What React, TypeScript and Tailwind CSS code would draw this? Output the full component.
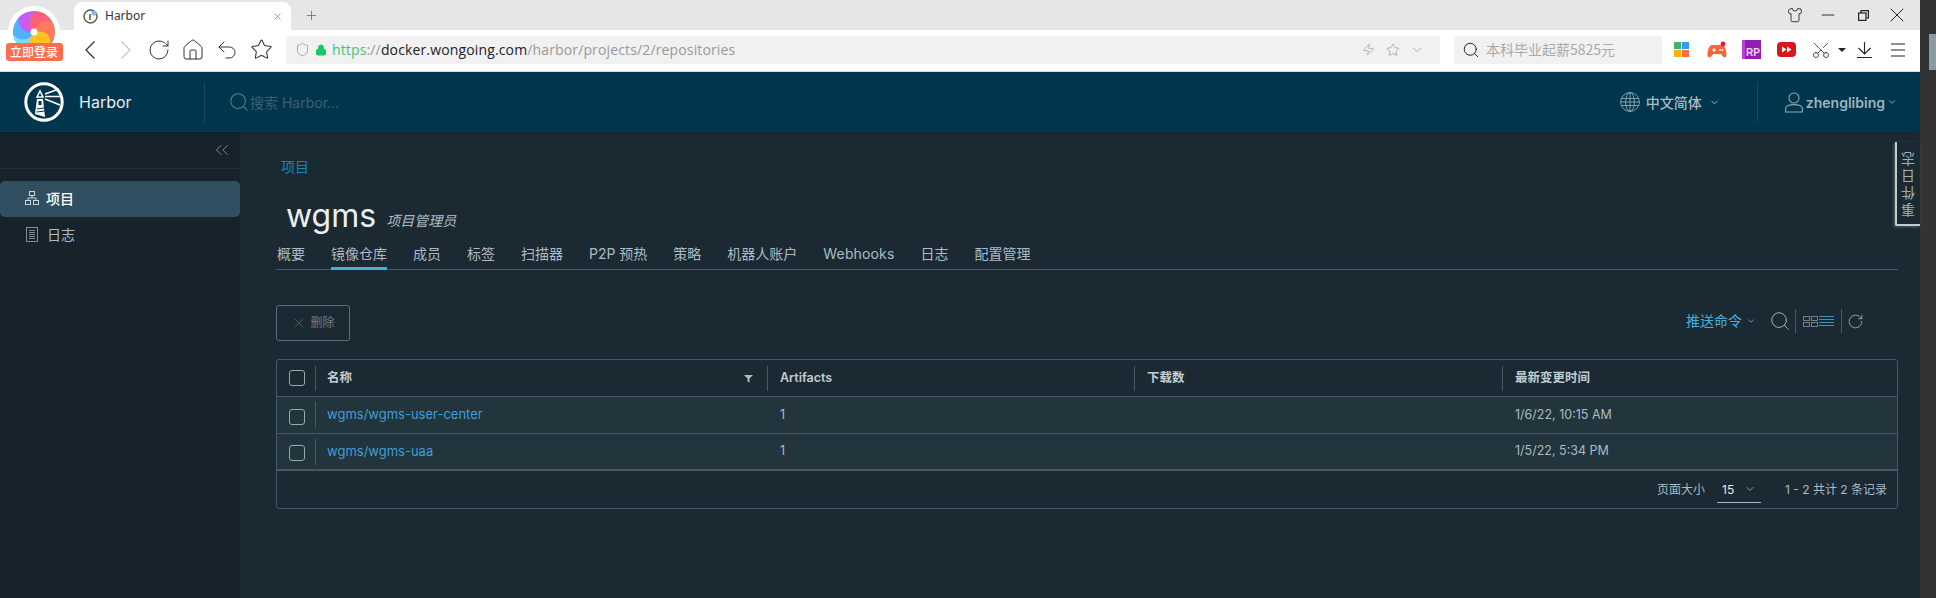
import React from 'react'
import { ChevronDown, ChevronsLeft, Lock, Minus, Plus, RotateCw, Scissors, Search, Shirt, Star, Undo2, X, Zap, Home, Shield } from 'lucide-react'

const cjk = "font-['Inter','Noto_Sans_CJK_SC',sans-serif]"

const tabs = ['概要', '镜像仓库', '成员', '标签', '扫描器', 'P2P 预热', '策略', '机器人账户', 'Webhooks', '日志', '配置管理']

const repos = [
  { name: 'wgms/wgms-user-center', artifacts: '1', time: '1/6/22, 10:15 AM' },
  { name: 'wgms/wgms-uaa', artifacts: '1', time: '1/5/22, 5:34 PM' },
]

const columns = 'grid grid-cols-[38px_452px_367px_368px_1fr]'

const Pinwheel = () => (
  <svg width="52" height="52" viewBox="0 0 52 52">
    <defs>
      <clipPath id="wheel"><circle cx="26" cy="26" r="21" /></clipPath>
    </defs>
    <circle cx="26" cy="26" r="26" fill="#fff" />
    <g clipPath="url(#wheel)">
      <circle cx="26" cy="26" r="21" fill="#6fdc7c" />
      <circle cx="15" cy="31" r="12" fill="#7fd8f5" />
      <circle cx="15" cy="21" r="12.5" fill="#4fb2ff" />
      <circle cx="23" cy="14" r="12.5" fill="#c85cf2" />
      <circle cx="34" cy="17" r="12.5" fill="#ff5f7a" />
      <circle cx="38" cy="27" r="12" fill="#ff7a5c" />
      <circle cx="32" cy="36" r="10.5" fill="#ffc21f" />
    </g>
    <circle cx="26" cy="26" r="3.5" fill="#fff" />
  </svg>
)

const HarborLogo = () => (
  <svg width="40" height="40" viewBox="0 0 40 40" fill="none">
    <circle cx="20" cy="20" r="18.2" stroke="#fff" strokeWidth="3" />
    <path d="M11 32 L13 17 L19 17 L21 35 Z" fill="#fff" />
    <path d="M13 15 L16 9 L19 15 Z" stroke="#fff" strokeWidth="1.6" />
    <rect x="14.5" y="19" width="3" height="4" fill="#00364d" />
    <path d="M13 27 L20 26 M12.5 30 L20.5 29" stroke="#00364d" strokeWidth="1" />
    <path d="M21 12 L35 7 M21 14.5 L37 14.5 M21 17 L36 23" stroke="#fff" strokeWidth="1.5" />
  </svg>
)

const Favicon = () => (
  <svg width="15" height="15" viewBox="0 0 15 15" fill="none">
    <circle cx="7.5" cy="7.5" r="6.5" stroke="#4a5a50" strokeWidth="1.4" />
    <rect x="6" y="5" width="2" height="6" fill="#5e8f4c" />
    <circle cx="11" cy="4" r="2.6" fill="#8fb6dc" />
  </svg>
)

const Tile = () => (
  <svg width="15" height="15" viewBox="0 0 15 15">
    <rect x="0" y="0" width="7" height="7" fill="#3bb56b" />
    <rect x="8" y="0" width="7" height="7" fill="#2f9bf4" />
    <rect x="0" y="8" width="7" height="7" fill="#ffb115" />
    <rect x="8" y="8" width="7" height="7" fill="#ff6b45" />
  </svg>
)

const Gamepad = () => (
  <svg width="20" height="18" viewBox="0 0 20 18">
    <path d="M5 4 H15 C18 4 19.5 10 19.5 14 C19.5 17 16.5 17 15 14.5 L14 13 H6 L5 14.5 C3.5 17 0.5 17 0.5 14 C0.5 10 2 4 5 4 Z" fill="#ff6238" />
    <path d="M5 9 H9 M7 7 V11" stroke="#fff" strokeWidth="1.2" />
    <circle cx="13" cy="9" r="1" fill="#fff" />
    <circle cx="15.5" cy="9" r="1" fill="#fff" />
    <circle cx="16" cy="3" r="2.4" fill="#f01d1d" />
  </svg>
)

const RpIcon = () => (
  <div className="flex h-[19px] w-[19px] items-end justify-end border-l-[3px] border-[#c13fd8] bg-[#8f1fb5] pr-[1px]">
    <span className="font-['Liberation_Sans',sans-serif] text-[10px] font-bold leading-[12px] text-[#f3d5ff]">RP</span>
  </div>
)

const VideoIcon = () => (
  <svg width="19" height="15" viewBox="0 0 19 15">
    <rect width="19" height="15" rx="4" fill="#d8171c" />
    <path d="M5 4.5 L9.5 7.5 L5 10.5 Z M10 4.5 L14.5 7.5 L10 10.5 Z" fill="#fff" />
  </svg>
)

const BackArrow = ({ color, flip }: { color: string; flip?: boolean }) => (
  <svg width="10" height="18" viewBox="0 0 10 18" fill="none" stroke={color} strokeWidth="1.3" className={flip ? 'scale-x-[-1]' : ''}>
    <path d="M9.5 0.5 L1 9 L9.5 17.5" />
  </svg>
)

const RestoreIcon = () => (
  <svg width="11" height="11" viewBox="0 0 11 11" fill="none" stroke="#222" strokeWidth="1.2">
    <rect x="0.6" y="3" width="7.4" height="7.4" />
    <path d="M3 3 V0.6 H10.4 V8 H8" />
  </svg>
)

const DownloadIcon = () => (
  <svg width="15" height="16" viewBox="0 0 15 16" fill="none" stroke="#222" strokeWidth="1.1">
    <path d="M7.5 0 V12 M1.5 6 L7.5 12 L13.5 6 M0 15.5 H15" />
  </svg>
)

const MenuIcon = () => (
  <svg width="14" height="14" viewBox="0 0 14 14" fill="none" stroke="#222" strokeWidth="1.1">
    <path d="M0 1 H14 M0 7 H14 M0 13 H14" />
  </svg>
)

const GlobeIcon = () => (
  <svg width="20" height="20" viewBox="0 0 20 20" fill="none" stroke="#8fa9b6" strokeWidth="0.9">
    <circle cx="10" cy="10" r="9.4" />
    <ellipse cx="10" cy="10" rx="4.4" ry="9.4" />
    <path d="M10 0.6 V19.4 M1.4 6.5 H18.6 M0.6 10 H19.4 M1.4 13.5 H18.6" />
  </svg>
)

const UserIcon = () => (
  <svg width="18" height="21" viewBox="0 0 18 21" fill="none" stroke="#8fa9b6" strokeWidth="1.1">
    <circle cx="9" cy="6" r="5" />
    <path d="M0.6 20 V16.5 C0.6 14 4.5 12.6 9 12.6 C13.5 12.6 17.4 14 17.4 16.5 V20 Z" />
  </svg>
)

const OrgIcon = () => (
  <svg width="14" height="14" viewBox="0 0 14 14" fill="none" stroke="#c9d3d9" strokeWidth="1">
    <rect x="4.5" y="0.5" width="5" height="4" />
    <rect x="0.5" y="9.5" width="5" height="4" />
    <rect x="8.5" y="9.5" width="5" height="4" />
    <path d="M7 4.5 V7 M3 9.5 V7 H11 V9.5" />
  </svg>
)

const LogIcon = () => (
  <svg width="12" height="15" viewBox="0 0 12 15" fill="none" stroke="#7d8e98" strokeWidth="1">
    <rect x="0.5" y="0.5" width="11" height="14" />
    <path d="M3 3.5 H9 M3 5.5 H9 M3 7.5 H9 M3 9.5 H9 M3 11.5 H9" />
  </svg>
)

const GridIcon = () => (
  <svg width="15" height="11" viewBox="0 0 15 11" fill="none" stroke="#6f818c" strokeWidth="1">
    <rect x="0.5" y="0.5" width="6" height="4" />
    <rect x="8.5" y="0.5" width="6" height="4" />
    <rect x="0.5" y="6.5" width="6" height="4" />
    <rect x="8.5" y="6.5" width="6" height="4" />
  </svg>
)

const ListIcon = () => (
  <svg width="15" height="11" viewBox="0 0 15 11" fill="none" stroke="#3c93b8" strokeWidth="1">
    <path d="M0 0.5 H15 M0 3.5 H15 M0 6.5 H15 M0 9.5 H15" />
  </svg>
)

const Check = () => <div className="h-[16px] w-[16px] rounded-[3px] border border-[#9aa8b0]" />

const BrowserChrome = () => (
  <>
    <div className="flex h-[30px] items-end bg-[#e6e6e6] pl-[74px] pr-[11px]">
      <div className="flex h-[28px] w-[217px] items-center rounded-t-[8px] bg-white pl-[9px] pr-[8px]">
        <Favicon />
        <span className="ml-[7px] flex-1 font-['Noto_Sans',sans-serif] text-[12px] text-[#333]">Harbor</span>
        <X size={11} color="#777" strokeWidth={1.5} />
      </div>
      <Plus size={15} color="#666" strokeWidth={1.2} className="mb-[7px] ml-[13px]" />
      <div className="ml-auto flex items-center self-center text-[#222]">
        <Shirt size={16} strokeWidth={1.3} />
        <Minus size={20} strokeWidth={1.1} className="ml-[15px]" />
        <div className="ml-[20px]"><RestoreIcon /></div>
        <X size={24} strokeWidth={1} className="ml-[16px]" />
      </div>
    </div>
    <div className="flex h-[42px] items-center border-b border-[#d5dde2] bg-white pb-[2px] pl-[85px]">
      <BackArrow color="#333" />
      <div className="ml-[26px]"><BackArrow color="#c4c4c4" flip /></div>
      <RotateCw size={24} color="#333" strokeWidth={1} className="ml-[16px]" />
      <Home size={24} color="#333" strokeWidth={1} className="ml-[10px]" />
      <Undo2 size={24} color="#333" strokeWidth={1} className="ml-[10px]" />
      <Star size={23} color="#333" strokeWidth={1.1} className="ml-[11px]" />
      <div className="ml-[13px] flex h-[28px] w-[1154px] shrink-0 items-center rounded-[3px] bg-[#f1f1f1] pl-[9px] pr-[16px]">
        <Shield size={15} color="#999" strokeWidth={1.3} />
        <Lock size={12} color="#17c964" fill="#17c964" strokeWidth={2} className="ml-[5px]" />
        <span className="ml-[5px] font-['Open_Sans',sans-serif] text-[14px] tracking-[0.01em] text-[#999]">
          <span className="text-[#3fc77a]">https</span>://<span className="text-[#222]">docker.wongoing.com</span>/harbor/projects/2/repositories
        </span>
        <Zap size={13} color="#999" strokeWidth={1.3} className="ml-auto" />
        <Star size={14} color="#999" strokeWidth={1.3} className="ml-[11px]" />
        <ChevronDown size={14} color="#999" strokeWidth={1.3} className="ml-[10px]" />
      </div>
      <div className="ml-[14px] flex h-[28px] w-[208px] shrink-0 items-center rounded-[3px] bg-[#f1f1f1] pl-[8px]">
        <Search size={18} color="#222" strokeWidth={1.3} />
        <span className="ml-[6px] font-['Noto_Sans_CJK_SC',sans-serif] text-[14px] text-[#aaa]">本科毕业起薪5825元</span>
      </div>
      <div className="ml-[12px] flex items-center">
        <Tile />
        <div className="ml-[18px]"><Gamepad /></div>
        <div className="ml-[15px]"><RpIcon /></div>
        <div className="ml-[16px]"><VideoIcon /></div>
        <Scissors size={20} color="#333" strokeWidth={1} className="ml-[15px] -rotate-90" />
        <div className="ml-[7px] h-0 w-0 border-x-[4px] border-t-[4px] border-x-transparent border-t-[#222]" />
        <div className="ml-[11px]"><DownloadIcon /></div>
        <div className="ml-[19px]"><MenuIcon /></div>
      </div>
    </div>
  </>
)

const Header = () => (
  <div className={`flex h-[60px] items-center bg-[#00364d] pl-[24px] ${cjk}`}>
    <HarborLogo />
    <span className="ml-[15px] w-[125px] text-[16px] text-[#e4eef2]">Harbor</span>
    <div className="h-[40px] w-px bg-[#1d4a5e]" />
    <Search size={22} color="#5b7f90" strokeWidth={1.1} className="ml-[23px]" />
    <span className="text-[14px] text-[#3b6073]">搜索 Harbor...</span>
    <div className="ml-auto"><GlobeIcon /></div>
    <span className="ml-[6px] text-[14px] font-medium text-[#a9bcc6]">中文简体</span>
    <ChevronDown size={11} color="#a9bcc6" className="ml-[7px]" />
    <div className="ml-[37px] h-[40px] w-px bg-[#1d4a5e]" />
    <div className="ml-[27px]"><UserIcon /></div>
    <span className="ml-[3px] text-[14px] font-semibold text-[#9db3bf]">zhenglibing</span>
    <ChevronDown size={10} color="#a9bcc6" className="ml-[2px] mr-[23px]" />
  </div>
)

const Sidebar = () => (
  <aside className={`w-[240px] shrink-0 bg-[#17232b] ${cjk}`}>
    <div className="flex h-[37px] items-center justify-end border-b border-[#1f2e38] pr-[7px]">
      <ChevronsLeft size={22} color="#8a9aa4" strokeWidth={0.9} />
    </div>
    <div className="mt-[12px] flex h-[36px] items-center rounded-[5px] bg-[#324f61] pb-[2px] pl-[25px]">
      <OrgIcon />
      <span className="ml-[7px] text-[14px] font-medium text-white">项目</span>
    </div>
    <div className="flex h-[36px] items-center pb-[2px] pl-[26px]">
      <LogIcon />
      <span className="ml-[9px] text-[14px] text-[#acbac3]">日志</span>
    </div>
  </aside>
)

const RepoTable = () => (
  <div className="mt-[16px] rounded-[3px] border border-[#485764] text-[12.5px]">
    <div className={`${columns} h-[37px] items-center border-b border-[#485764] font-semibold text-[#c1cdd4]`}>
      <div className="flex justify-center pl-[2px]"><Check /></div>
      <div className="flex h-[25px] items-center justify-between border-l border-[#485764] pl-[11px] pr-[14px]">
        <span>名称</span>
        <svg width="9" height="9" viewBox="0 0 9 9"><path d="M0 1 H9 L5.5 4.5 V8.5 L3.5 7.5 V4.5 Z" fill="#adbbc4" /></svg>
      </div>
      <div className="flex h-[25px] items-center border-l border-[#485764] pl-[12px]">Artifacts</div>
      <div className="flex h-[25px] items-center border-l border-[#485764] pl-[12px]">下载数</div>
      <div className="flex h-[25px] items-center border-l border-[#485764] pl-[12px]">最新变更时间</div>
    </div>
    {repos.map((repo, i) => (
      <div key={repo.name} className={`${columns} h-[37px] items-center bg-[#22343c] text-[#acbac3] ${i === repos.length - 1 ? 'border-b-2' : 'border-b'} border-[#485764]`}>
        <div className="flex justify-center pl-[1px] pt-[3px]"><Check /></div>
        <div className="flex h-[26px] items-center border-l border-[#485764] pl-[11px] text-[13px] text-[#3f9fd8]">{repo.name}</div>
        <div className="pl-[13px]">{repo.artifacts}</div>
        <div />
        <div className="pl-[13px]">{repo.time}</div>
      </div>
    ))}
    <div className="flex h-[37px] items-center justify-end pr-[10px] text-[12px] text-[#acbac3]">
      <span>页面大小</span>
      <div className="ml-[12px] flex h-[26px] w-[44px] items-center justify-between border-b border-[#acbac3] px-[5px] pt-[2px]">
        <span className="text-[#e6edf1]">15</span>
        <ChevronDown size={12} strokeWidth={1.5} className="mb-[3px]" />
      </div>
      <span className="ml-[24px]">1 - 2 共计 2 条记录</span>
    </div>
  </div>
)

const Content = () => (
  <main className={`relative flex-1 bg-[#1b2a32] pl-[36px] pr-[22px] ${cjk}`}>
    <div className="pl-[5px] pt-[25px] text-[14px] leading-[20px] text-[#1585bd]">项目</div>
    <div className="mt-[19px] flex h-[40px] items-center pl-[10px]">
      <span className="text-[32px] leading-[40px] text-[#eaf0f3]">wgms</span>
      <span className="ml-[10px] mt-[8px] text-[14px] italic text-[#acbac3]">项目管理员</span>
    </div>
    <nav className="mt-[5px] flex h-[29px] gap-[26px] border-b border-[#485764] pl-[1px] text-[14px] text-[#acbac3]">
      {tabs.map((tab, i) => (
        <span key={tab} className={`h-[29px] whitespace-nowrap leading-[26px] ${i === 1 ? 'border-b-[3px] border-[#49afd9]' : ''} ${tab === 'Webhooks' ? 'tracking-[0.01em]' : ''}`}>{tab}</span>
      ))}
    </nav>
    <div className="mt-[35px] flex h-[38px] items-start justify-between">
      <button className="flex h-[36px] w-[74px] items-center justify-center gap-[3px] rounded-[3px] border border-[#5c6b75] text-[12px] text-[#6f7d86]">
        <X size={16} strokeWidth={0.9} />
        删除
      </button>
      <div className="mt-[4px] flex h-[24px] items-center pr-[34px]">
        <span className="pb-[2px] text-[14px] text-[#49afd9]">推送命令</span>
        <ChevronDown size={10} color="#49afd9" className="ml-[4px]" />
        <Search size={22} color="#acbac3" strokeWidth={1} className="ml-[13px]" />
        <div className="ml-[4px] h-[24px] w-px bg-[#485764]" />
        <div className="ml-[7px]"><GridIcon /></div>
        <div className="ml-[1px]"><ListIcon /></div>
        <div className="ml-[7px] h-[24px] w-px bg-[#485764]" />
        <RotateCw size={17} color="#acbac3" strokeWidth={1.1} className="ml-[5px]" />
      </div>
    </div>
    <RepoTable />
    {/* event log tab sitting on the right edge */}
    <div className="absolute right-0 top-[10px] flex h-[84px] w-[25px] items-center justify-center rounded-bl-[2px] border-b-2 border-l-2 border-[#c3ccd1] bg-[#1b2a32] text-[14px] text-[#9fb0ba] shadow-[-1px_1px_3px_rgba(255,255,255,0.25)]">
      <span className="rotate-180 tracking-[3px] [writing-mode:vertical-rl]">事件日志</span>
    </div>
  </main>
)

export default function App() {
  return (
    <div className="relative flex h-[598px] w-[1936px] overflow-hidden bg-[#333]">
      <div className="flex w-[1920px] shrink-0 flex-col">
        <BrowserChrome />
        <Header />
        <div className="flex flex-1">
          <Sidebar />
          <Content />
        </div>
      </div>
      <div className="ml-[9px] mt-[34px] h-[36px] w-[7px] shrink-0 bg-[#8a9ba6]" />
      {/* login avatar floating over the tab strip */}
      <div className="absolute left-[5px] top-[6px] flex w-[58px] flex-col items-center">
        <Pinwheel />
        <div className="-mt-[15px] w-[57px] rounded-[3px] bg-[#ff6b4d] text-center font-['Noto_Sans_CJK_SC',sans-serif] text-[12px] font-medium leading-[18px] text-white">立即登录</div>
      </div>
    </div>
  )
}
